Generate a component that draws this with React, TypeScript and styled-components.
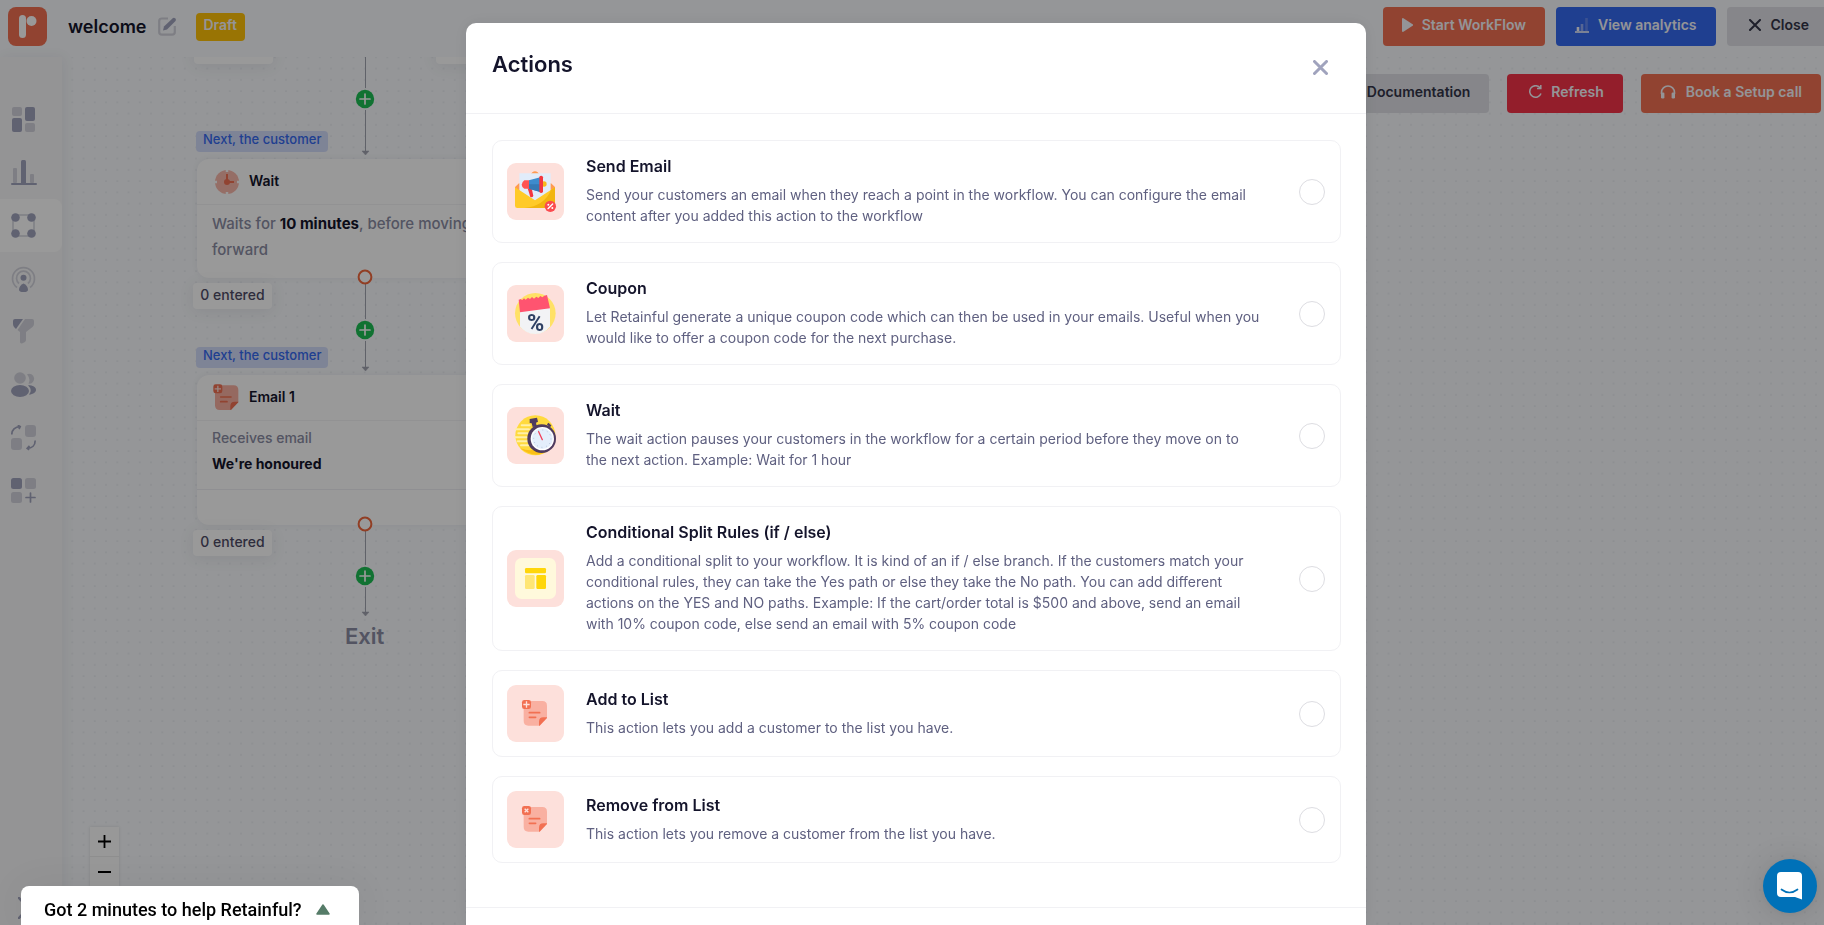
import React from 'react';
import styled, { createGlobalStyle, css } from 'styled-components';

const GlobalStyle = createGlobalStyle`
  *, *::before, *::after { box-sizing: border-box; }
  html, body, #root { height: 100%; }
  body {
    margin: 0;
    overflow: hidden;
    font-family: Inter, "Liberation Sans", sans-serif;
    color: #14142b;
    background: #f8fafd;
  }
  h1, h2, h3, p { margin: 0; }
  button { font-family: inherit; cursor: pointer; }
  a { color: inherit; text-decoration: none; }
`;

/* ---------- Page shell ---------- */

const Page = styled.div`
  height: 100vh;
  display: flex;
  flex-direction: column;
  overflow: hidden;
`;

const TopBar = styled.header`
  height: 57px;
  flex: none;
  display: flex;
  align-items: center;
  justify-content: space-between;
  padding-left: 8px;
  padding-bottom: 4px;
  overflow: hidden;
  background: #f8fafd;
  box-shadow: 0 2px 12px rgba(20, 20, 43, 0.06);
`;

const TitleGroup = styled.div`
  display: flex;
  align-items: center;
`;

const Logo = styled.a`
  display: flex;
  margin-right: 21px;
`;

const WorkflowName = styled.h1`
  font-size: 18px;
  line-height: 24px;
  font-weight: 600;
  margin-right: 11px;
`;

const IconButton = styled.button`
  display: flex;
  padding: 0;
  border: 0;
  background: none;
`;

const StatusBadge = styled.span`
  height: 28px;
  margin-left: 19px;
  padding: 0 8px;
  border-radius: 4px;
  background: #ffc107;
  color: #f7f7fc;
  font-size: 14px;
  line-height: 24px;
  font-weight: 600;
`;

const TopActions = styled.div`
  display: flex;
  gap: 11px;
  margin-right: -4px;
`;

type Tone = 'orange' | 'blue' | 'grey' | 'red';

const tones: Record<Tone, [string, string]> = {
  orange: ['#f27052', '#f7f7fc'],
  blue: ['#3569f0', '#f7f7fc'],
  grey: ['#dfe0e6', '#333448'],
  red: ['#f53349', '#f7f7fc'],
};

const Button = styled.button<{ $tone: Tone }>`
  height: 39px;
  display: flex;
  align-items: center;
  gap: 9px;
  padding: 0 19px 3px;
  border: 0;
  border-radius: 4px;
  background: ${(p) => tones[p.$tone][0]};
  color: ${(p) => tones[p.$tone][1]};
  font-size: 14px;
  line-height: 20px;
  font-weight: 600;
  white-space: nowrap;
`;

const Body = styled.div`
  flex: 1;
  min-height: 0;
  display: flex;
`;

const SideNav = styled.nav`
  width: 62px;
  flex: none;
  display: flex;
  flex-direction: column;
  padding-top: 36px;
  background: #f7f7f8;
  box-shadow: 2px 0 12px rgba(20, 20, 43, 0.06);
  z-index: 1;
`;

const NavLink = styled.a<{ $active?: boolean }>`
  height: 53px;
  flex: none;
  display: flex;
  align-items: center;
  padding-left: 11px;
  border-radius: 0 8px 8px 0;
  ${(p) => p.$active && css`background: #fff;`}
`;

const ExpandButton = styled(IconButton)`
  margin: auto 0 6px 18px;
`;

/* ---------- Workflow canvas ---------- */

const Canvas = styled.main`
  position: relative;
  flex: 1;
  min-width: 0;
  overflow: hidden;
  background: #f8fafd;
`;

const DotGrid = styled.svg`
  position: absolute;
  inset: 0;
  width: 100%;
  height: 100%;
`;

const CanvasActions = styled.div`
  position: relative;
  display: flex;
  justify-content: flex-end;
  gap: 18px;
  padding: 17px 3px 0;
`;

const Edges = styled.svg`
  position: absolute;
  left: 0;
  top: 0;
  width: 420px;
  height: 600px;
  pointer-events: none;
  z-index: 2;
`;

const Placed = styled.div<{ $x: number; $y: number }>`
  position: absolute;
  left: ${(p) => p.$x}px;
  top: ${(p) => p.$y}px;
`;

const StepTag = styled(Placed)`
  height: 21px;
  padding: 0 7px;
  border-radius: 4px;
  background: #d3dcfb;
  color: #3569f0;
  font-size: 13px;
  line-height: 17px;
  font-weight: 500;
`;

const Counter = styled(Placed)`
  width: 79px;
  height: 26px;
  border-radius: 4px;
  background: #fff;
  box-shadow: 0 2px 16px rgba(20, 20, 43, 0.08);
  color: #4e4b66;
  font-size: 14px;
  line-height: 24px;
  font-weight: 500;
  text-align: center;
`;

const Step = styled(Placed)<{ $h: number }>`
  width: 336px;
  height: ${(p) => p.$h}px;
  border-radius: 12px;
  background: #fff;
  box-shadow: 0 0 6px rgba(20, 20, 43, 0.06);
`;

const StepHead = styled.div`
  height: 46px;
  display: flex;
  align-items: center;
  gap: 10px;
  padding: 0 16px 2px;
  border-bottom: 1px solid #f3f3f6;
  font-size: 14px;
  font-weight: 600;
`;

const StepBody = styled.p<{ $divided?: boolean }>`
  padding: 6px 32px 10px 15px;
  color: #8a8ca3;
  font-size: 15px;
  line-height: 26px;
  font-weight: 500;
  strong { color: #14142b; font-weight: 700; }
  ${(p) => p.$divided && css`
    padding-top: 4px;
    padding-bottom: 12px;
    border-bottom: 1px solid #eeeef3;
    font-size: 14px;
  `}
`;

const SubjectLine = styled.span`
  display: block;
  color: #14142b;
  font-weight: 700;
`;

const ExitLabel = styled(Placed)`
  color: #8a8ca3;
  font-size: 22px;
  line-height: 28px;
  font-weight: 600;
`;

const ZoomControls = styled.div`
  position: absolute;
  left: 28px;
  bottom: 8px;
  display: flex;
  flex-direction: column;
  box-shadow: 0 0 3px rgba(0, 0, 0, 0.12);
`;

const ZoomButton = styled.button`
  width: 29px;
  height: 30px;
  display: flex;
  align-items: center;
  justify-content: center;
  padding: 0;
  border: 0;
  border-bottom: 1px solid #eee;
  background: #fefefe;
`;

/* ---------- Dialog ---------- */

const Overlay = styled.div`
  position: fixed;
  inset: 0;
  z-index: 10;
  display: flex;
  justify-content: center;
  padding: 23px 24px 0 32px;
  overflow: hidden;
  background: rgba(0, 0, 0, 0.4);
`;

const Dialog = styled.section`
  width: 100%;
  max-width: 900px;
  min-height: 100%;
  display: flex;
  flex-direction: column;
  border-radius: 10px 10px 0 0;
  background: #fff;
  box-shadow: 0 0 16px rgba(20, 20, 43, 0.08);
`;

const DialogHead = styled.header`
  height: 91px;
  flex: none;
  display: flex;
  align-items: center;
  justify-content: space-between;
  padding: 0 38px 1px 26px;
  border-bottom: 1px solid #f1f1f4;
`;

const DialogTitle = styled.h2`
  padding-bottom: 8px;
  font-size: 22px;
  line-height: 28px;
  font-weight: 600;
`;

const ActionList = styled.form`
  flex: none;
  display: flex;
  flex-direction: column;
  gap: 19px;
  padding: 26px 25px 44px 26px;
`;

const DialogFoot = styled.footer`
  flex: 1;
  border-top: 1px solid #f1f1f4;
`;

const ActionCard = styled.label`
  display: flex;
  align-items: center;
  padding: 14px 15px 14px 14px;
  border: 1px solid #f1f1f4;
  border-radius: 10px;
  cursor: pointer;
`;

const ActionIcon = styled.svg`
  width: 57px;
  height: 57px;
  flex: none;
  border-radius: 9px;
  background: #fde0db;
`;

const ActionText = styled.span`
  flex: 1;
  display: flex;
  flex-direction: column;
  gap: 8px;
  padding: 2px 36px 2px 22px;
`;

const ActionName = styled.span`
  font-size: 16px;
  line-height: 19px;
  font-weight: 600;
`;

const ActionDescription = styled.span`
  color: #5f6080;
  font-size: 14px;
  line-height: 21px;
`;

const Radio = styled.input`
  appearance: none;
  width: 26px;
  height: 26px;
  flex: none;
  margin: 0;
  border: 1px solid #dddde2;
  border-radius: 50%;
  background: #fff;
  &:checked { border: 8px solid #f27052; }
`;

/* ---------- Floating widgets ---------- */

const Survey = styled.button`
  position: fixed;
  left: 21px;
  bottom: 0;
  z-index: 20;
  height: 39px;
  display: flex;
  align-items: center;
  gap: 14px;
  padding: 8px 29px 0 23px;
  border: 0;
  border-radius: 8px 8px 0 0;
  background: #fff;
  box-shadow: 0 0 40px rgba(0, 0, 0, 0.06);
  color: #000;
  && { font-family: Roboto, sans-serif; }
  font-size: 18px;
  line-height: 24px;
  font-weight: 500;
`;

const ChatLauncher = styled.button`
  position: fixed;
  right: 7px;
  bottom: 12px;
  z-index: 20;
  width: 54px;
  height: 54px;
  display: flex;
  align-items: center;
  justify-content: center;
  padding: 0;
  border: 0;
  border-radius: 50%;
  background: #0071b8;
  box-shadow: 0 1px 6px rgba(0, 0, 0, 0.06), 0 2px 32px rgba(0, 0, 0, 0.12);
`;

/* ---------- Drawings ---------- */

const DARK = '#a0a3bd';
const LIGHT = '#d2d3dc';

const navIcons: { label: string; active?: boolean; art: React.ReactNode }[] = [
  {
    label: 'Dashboard',
    art: (
      <>
        <rect x="1" y="0" width="10" height="9" rx="2" fill={LIGHT} />
        <rect x="14" y="0" width="10" height="14" rx="2" fill={DARK} />
        <rect x="1" y="11" width="10" height="14" rx="2" fill={DARK} />
        <rect x="14" y="16" width="10" height="9" rx="2" fill={LIGHT} />
      </>
    ),
  },
  {
    label: 'Analytics',
    art: (
      <>
        <rect x="2" y="8" width="4" height="15" rx="1" fill={LIGHT} />
        <rect x="10" y="0" width="5" height="24" rx="1.500" fill={DARK} />
        <rect x="19" y="14" width="4" height="9" rx="1" fill={LIGHT} />
        <rect x="0" y="23" width="26" height="2" rx="1" fill={DARK} />
      </>
    ),
  },
  {
    label: 'Workflows',
    active: true,
    art: (
      <>
        <rect x="2" y="2" width="21" height="21" rx="6" fill="none" stroke={LIGHT} strokeWidth="1.500" />
        <circle cx="4.500" cy="4.500" r="4.300" fill={DARK} />
        <circle cx="20.500" cy="4.500" r="4.300" fill={DARK} />
        <circle cx="4.500" cy="20.500" r="4.300" fill={DARK} />
        <circle cx="20.500" cy="20.500" r="4.300" fill={DARK} />
      </>
    ),
  },
  {
    label: 'Signup forms',
    art: (
      <>
        <path d="M6 21.500A11 11 0 1 1 19 21.500" fill="none" stroke={LIGHT} strokeWidth="1.700" />
        <path d="M8 17.500A7 7 0 1 1 17 17.500" fill="none" stroke={LIGHT} strokeWidth="1.700" />
        <circle cx="12.500" cy="11.800" r="3" fill={DARK} />
        <path d="M12.500 17.500c2.500 1 4.500 3.500 4.500 6 0 2-1.500 2.500-4.500 2.500s-4.500-.5-4.500-2.500c0-2.500 2-5 4.500-6z" fill={DARK} />
      </>
    ),
  },
  {
    label: 'Segments',
    art: (
      <>
        <path d="M4 0h8L5 10 3 8Q2 6.500 2 5V2q0-2 2-2z" fill={DARK} />
        <path d="M14 0h7q2 0 2 2v3q0 1.500-1.500 3L15 13v8q0 1.500-1.500 2.300l-2 1Q9 25 9 23V13l-2.500-2z" fill={LIGHT} />
      </>
    ),
  },
  {
    label: 'Customers',
    art: (
      <>
        <path d="M16 2.200a5 5 0 1 1 1.500 9.500Q20 7 16 2.200z" fill={LIGHT} />
        <circle cx="9" cy="6" r="5.800" fill={LIGHT} />
        <path d="M17 13.300c5 0 8 2 8 4.500s-2.500 4.500-7 5q4-4.500-1-9.500z" fill={DARK} />
        <ellipse cx="9" cy="19" rx="9" ry="6" fill={DARK} />
      </>
    ),
  },
  {
    label: 'Automations',
    art: (
      <>
        <rect x="14" y="0" width="11" height="12" rx="3" fill={LIGHT} />
        <rect x="0" y="13" width="11" height="12" rx="3" fill={LIGHT} />
        <path d="M.8 9.500C.8 5 4 1.600 9 1.600M6.800.2 9.200 1.600 8 4M24.200 15.500c0 4.500-3 7.800-8 7.800M18.500 20.800l-2.300 2.500 2 1.400" fill="none" stroke={DARK} strokeWidth="1.700" />
      </>
    ),
  },
  {
    label: 'Integrations',
    art: (
      <>
        <rect x="0" y="0" width="11" height="11" rx="2.500" fill={DARK} />
        <rect x="14" y="0" width="11" height="11" rx="2.500" fill={LIGHT} />
        <rect x="0" y="14" width="11" height="11" rx="2.500" fill={LIGHT} />
        <path d="M19.500 15v9M15 19.500h9" stroke={DARK} strokeWidth="1.700" strokeLinecap="round" />
      </>
    ),
  },
];

const ListArt = ({ remove }: { remove?: boolean }) => (
  <>
    <path d="M64 48h42q14 0 14 14v36L96 122H64q-14 0-14-14V62q0-14 14-14z" fill="#f9b0a1" />
    <path d="M120 97v2L98 122h-2v-12q0-13 13-13z" fill="#f27052" />
    <path d="M67 83h31M67 97h19" stroke="#f27052" strokeWidth="5" strokeLinecap="round" />
    <rect x="45" y="45" width="27" height="27" rx="7" fill="#f27052" />
    <path d={remove ? 'M53 53l11 11M64 53L53 64' : 'M58.500 49v19M49 58.500h19'} stroke="#fde0db" strokeWidth="4" />
  </>
);

const EmailArt = () => (
  <>
    <path d="M24 72 36 61h12L76 28q8-6 16 0l28 33h12l12 11v20H24z" fill="#ff9a52" />
    <path d="M37 31h94v60l-47 28-47-28z" fill="#e1ecfa" />
    <path d="M62 76l12 0 5 22q-2 6-9 4z" fill="#f3373f" />
    <circle cx="111" cy="63" r="8" fill="#f9b81b" />
    <path d="M52 52h16v25H52q-8-5-8-12t8-13z" fill="#ff5353" />
    <path d="M66 52 100 43v44L66 77z" fill="#3d8bcd" />
    <path d="M66 64h34v23L66 77z" fill="#3579b5" />
    <rect x="97" y="38" width="11" height="52" rx="5" fill="#f3373f" />
    <path d="M24 73l60 39 60-39v55q0 7-7 7H31q-7 0-7-7z" fill="#ffca28" />
    <path d="M144 73v55q0 7-7 7H52q60-6 80-54z" fill="#f2b50f" />
    <circle cx="130" cy="130" r="17" fill="#fb4b50" />
    <path d="M123 137l14-14" stroke="#fff" strokeWidth="4" strokeLinecap="round" />
    <circle cx="124" cy="125" r="3" fill="#fff" />
    <circle cx="136" cy="135" r="3" fill="#fff" />
  </>
);

const CouponArt = () => (
  <>
    <circle cx="85" cy="85" r="61" fill="#ffe166" />
    <path d="M39 76l90-10v59q-18 22-44 22-27 0-46-22z" fill="#f2f3f5" />
    <path d="M35 44l7-2 3 4 6-6 5 4 7-6 6 4 6-6 6 5 7-6 6 4 6-6 6 4 6-5 8-2 9 40-90 12z" fill="#ff5470" />
    <text x="86" y="138" textAnchor="middle" fontSize="70" fontWeight="700" fontFamily="Roboto, sans-serif" fill="#2f4164">%</text>
  </>
);

const WaitArt = () => (
  <>
    <circle cx="85" cy="85" r="60" fill="#ffda3e" />
    <path d="M40 124q55 20 90-30v30q-40 38-90 0z" fill="#fbbf16" />
    <path d="M44 55h24M26 67h40M34 79h28M24 91h36M32 103h30M42 115h26" stroke="#fff0a8" strokeWidth="6" strokeLinecap="round" />
    <path d="M68 36l22-4 3 12-6 3 2 10-12 3-3-11-6-1z" fill="#4f3b5f" />
    <path d="M122 50l9 8" stroke="#4f3b5f" strokeWidth="7" />
    <circle cx="104" cy="95" r="43" fill="#4f3b5f" />
    <circle cx="106" cy="95" r="35" fill="#fff" />
    <circle cx="106" cy="95" r="31" fill="#e4eefb" />
    <circle cx="106" cy="95" r="26" fill="none" stroke="#9fb3cc" strokeWidth="3" strokeDasharray="2 11.600" />
    <path d="M95 74l11 24" stroke="#f0405a" strokeWidth="4" strokeLinecap="round" />
  </>
);

const SplitArt = () => (
  <>
    <rect x="24" y="24" width="123" height="123" rx="20" fill="#fff9dc" />
    <rect x="54" y="54" width="63" height="16" rx="4" fill="#ffd60a" />
    <rect x="54" y="75" width="29" height="42" rx="4" fill="#ffe675" />
    <rect x="88" y="75" width="29" height="42" rx="4" fill="#ffd60a" />
  </>
);

const actions: { id: string; name: string; text: string; art: React.ReactNode }[] = [
  {
    id: 'email',
    name: 'Send Email',
    text: 'Send your customers an email when they reach a point in the workflow. You can configure the email content after you added this action to the workflow',
    art: <EmailArt />,
  },
  {
    id: 'coupon',
    name: 'Coupon',
    text: 'Let Retainful generate a unique coupon code which can then be used in your emails. Useful when you would like to offer a coupon code for the next purchase.',
    art: <CouponArt />,
  },
  {
    id: 'wait',
    name: 'Wait',
    text: 'The wait action pauses your customers in the workflow for a certain period before they move on to the next action. Example: Wait for 1 hour',
    art: <WaitArt />,
  },
  {
    id: 'split',
    name: 'Conditional Split Rules (if / else)',
    text: 'Add a conditional split to your workflow. It is kind of an if / else branch. If the customers match your conditional rules, they can take the Yes path or else they take the No path. You can add different actions on the YES and NO paths. Example: If the cart/order total is $500 and above, send an email with 10% coupon code, else send an email with 5% coupon code',
    art: <SplitArt />,
  },
  {
    id: 'add',
    name: 'Add to List',
    text: 'This action lets you add a customer to the list you have.',
    art: <ListArt />,
  },
  {
    id: 'remove',
    name: 'Remove from List',
    text: 'This action lets you remove a customer from the list you have.',
    art: <ListArt remove />,
  },
];

/* Connector x inside the canvas, shared by every edge. */
const CX = 303;

const AddPoint = ({ y }: { y: number }) => (
  <g>
    <circle cx={CX} cy={y} r="11" fill="#f8fafd" />
    <circle cx={CX} cy={y} r="9.200" fill="#1dbf54" />
    <path d={`M${CX - 5} ${y}h10M${CX} ${y - 5}v10`} stroke="#fff" strokeWidth="1.700" strokeLinecap="round" />
  </g>
);

const Arrow = ({ from, to }: { from: number; to: number }) => (
  <g>
    <path d={`M${CX + 0.5} ${from}V${to - 3}`} stroke="#a0a3b0" strokeWidth="1" />
    <path d={`M${CX - 3} ${to - 4}h7l-3.500 4z`} fill="#a0a3b0" stroke="#a0a3b0" strokeWidth=".5" />
  </g>
);

const OutPoint = ({ y }: { y: number }) => (
  <circle cx={CX} cy={y} r="6.400" fill="#fff" stroke="#f2683c" strokeWidth="2" />
);

export default function App() {
  return (
    <>
      <GlobalStyle />
      <Page>
        <TopBar>
          <TitleGroup>
            <Logo href="#home" aria-label="Retainful">
              <svg width="39" height="39" viewBox="0 0 39 39">
                <rect width="39" height="39" rx="8" fill="#f27052" />
                <rect x="11" y="8" width="7" height="23" rx="3.500" fill="#fff" />
                <circle cx="23.500" cy="14" r="5" fill="#fff" />
              </svg>
            </Logo>
            <WorkflowName>welcome</WorkflowName>
            <IconButton aria-label="Rename workflow">
              <svg width="19" height="19" viewBox="0 0 19 19">
                <path d="M10 1.500H4Q1.200 1.500 1.200 4v11q0 2.700 2.800 2.700h10q2.800 0 2.800-2.700V9" fill="none" stroke="#d2d3dc" strokeWidth="2.200" />
                <path d="M5 13.500l1-4 8.700-8.300q1.300-1 2.600.2t.2 2.600L9 12.500z" fill="#a0a3bd" />
              </svg>
            </IconButton>
            <StatusBadge>Draft</StatusBadge>
          </TitleGroup>
          <TopActions>
            <Button $tone="orange">
              <svg width="11" height="14" viewBox="0 0 11 14"><path d="M1 0l10 6.500v1L1 14Q0 14 0 13V1Q0 0 1 0z" fill="#f7f7fc" /></svg>
              Start WorkFlow
            </Button>
            <Button $tone="blue">
              <svg width="14" height="15" viewBox="0 0 14 15">
                <path d="M0 14h14" stroke="#f7f7fc" strokeWidth="1.600" />
                <path d="M3 13V9" stroke="#f7f7fc" strokeWidth="2.600" />
                <path d="M7 13V6" stroke="#8fabf7" strokeWidth="2.600" />
                <path d="M11.500 13V0" stroke="#6288f3" strokeWidth="2.600" />
              </svg>
              View analytics
            </Button>
            <Button $tone="grey">
              <svg width="16" height="12" viewBox="-3 0 16 12"><path d="M1 1l10 10M11 1L1 11" stroke="#333448" strokeWidth="2" strokeLinecap="round" /></svg>
              Close
            </Button>
          </TopActions>
        </TopBar>

        <Body>
          <SideNav aria-label="Main">
            {navIcons.map((n) => (
              <NavLink key={n.label} href="#nav" aria-label={n.label} $active={n.active}>
                <svg width="26" height="26" viewBox="0 0 26 26">{n.art}</svg>
              </NavLink>
            ))}
            <ExpandButton aria-label="Expand menu">
              <svg width="20" height="22" viewBox="0 0 20 22">
                <path d="M1 1l9 10-9 10" fill="none" stroke={DARK} strokeWidth="2.500" strokeLinecap="round" />
              </svg>
            </ExpandButton>
          </SideNav>

          <Canvas>
            <DotGrid aria-hidden="true">
              <defs>
                <pattern id="dots" x="4.700" y="5.900" width="11.250" height="11.250" patternUnits="userSpaceOnUse">
                  <circle cx="5.600" cy="5.600" r=".55" fill="#c8ccd6" />
                </pattern>
              </defs>
              <rect width="100%" height="100%" fill="url(#dots)" />
            </DotGrid>

            <CanvasActions>
              <Button $tone="grey">Documentation</Button>
              <Button $tone="red">
                <svg width="16" height="14" viewBox="-3 0 16 14" fill="none" stroke="#f7f7fc" strokeWidth="1.500">
                  <path d="M11.200 3A5.800 5.800 0 1 0 12 8.500" />
                  <path d="M11.800 0v3.600H8" />
                </svg>
                Refresh
              </Button>
              <Button $tone="orange">
                <svg width="17" height="14" viewBox="0 0 17 14">
                  <path d="M1.500 9V7.500a6.500 6.500 0 0 1 13 0V9" fill="none" stroke="#f7f7fc" strokeWidth="1.600" />
                  <rect x="1" y="7.500" width="3.400" height="6" rx="1.200" fill="#f7f7fc" />
                  <rect x="11.600" y="7.500" width="3.400" height="6" rx="1.200" fill="#f7f7fc" />
                </svg>
                Book a Setup call
              </Button>
            </CanvasActions>

            <Counter $x={132} $y={-19} />
            <Counter $x={374} $y={-19} />

            <StepTag $x={134} $y={74}>Next, the customer</StepTag>
            <Step $x={135} $y={102} $h={119}>
              <StepHead>
                <svg width="26" height="26" viewBox="0 0 26 26">
                  <circle cx="14" cy="14" r="12" fill="#f9b8ab" />
                  <path d="M14 1v3M14 24v3M1 14h3M24 14h3" stroke="#fff" strokeWidth="2.500" />
                  <path d="M14 6v8h7" fill="none" stroke="#f27052" strokeWidth="2" />
                  <circle cx="14" cy="14" r="3" fill="#f27052" />
                </svg>
                Wait
              </StepHead>
              <StepBody>Waits for <strong>10 minutes</strong>, before moving forward</StepBody>
            </Step>
            <Counter $x={131} $y={226}>0 entered</Counter>

            <StepTag $x={134} $y={290}>Next, the customer</StepTag>
            <Step $x={135} $y={318} $h={150}>
              <StepHead>
                <svg width="26" height="26" viewBox="44 44 78 78"><ListArt /></svg>
                Email 1
              </StepHead>
              <StepBody $divided>
                Receives email
                <SubjectLine>We're honoured</SubjectLine>
              </StepBody>
            </Step>
            <Counter $x={131} $y={473}>0 entered</Counter>
            <ExitLabel $x={283} $y={565}>Exit</ExitLabel>

            <Edges viewBox="0 0 420 600">
              <Arrow from={0} to={98} />
              <AddPoint y={42} />
              <Arrow from={220} to={314} />
              <OutPoint y={220} />
              <AddPoint y={273} />
              <Arrow from={467} to={559} />
              <OutPoint y={467} />
              <AddPoint y={519} />
            </Edges>

            <ZoomControls>
              <ZoomButton aria-label="Zoom in">
                <svg width="13" height="13"><path d="M0 6.500h13M6.500 0v13" stroke="#000" strokeWidth="1.800" /></svg>
              </ZoomButton>
              <ZoomButton aria-label="Zoom out">
                <svg width="13" height="13"><path d="M0 7h13" stroke="#000" strokeWidth="2" /></svg>
              </ZoomButton>
              <ZoomButton aria-label="Fit view">
                <svg width="13" height="13"><path d="M1 4V1h3M9 1h3v3M12 9v3H9M4 12H1V9" fill="none" stroke="#000" /></svg>
              </ZoomButton>
            </ZoomControls>
          </Canvas>
        </Body>
      </Page>

      <Overlay>
        <Dialog role="dialog" aria-modal="true" aria-labelledby="dialog-title">
          <DialogHead>
            <DialogTitle id="dialog-title">Actions</DialogTitle>
            <IconButton aria-label="Close dialog">
              <svg width="15" height="15" viewBox="0 0 15 15"><path d="M1.500 1.500l12 12M13.500 1.500l-12 12" stroke="#a0a3bd" strokeWidth="3" strokeLinecap="round" /></svg>
            </IconButton>
          </DialogHead>
          <ActionList>
            {actions.map((a) => (
              <ActionCard key={a.id} htmlFor={`action-${a.id}`}>
                <ActionIcon viewBox="0 0 171 171">{a.art}</ActionIcon>
                <ActionText>
                  <ActionName>{a.name}</ActionName>
                  <ActionDescription>{a.text}</ActionDescription>
                </ActionText>
                <Radio type="radio" name="action" id={`action-${a.id}`} />
              </ActionCard>
            ))}
          </ActionList>
          <DialogFoot />
        </Dialog>
      </Overlay>

      <Survey>
        Got 2 minutes to help Retainful?
        <svg width="14" height="11" viewBox="0 0 14 11"><path d="M7 1L13 10H1z" fill="#567c68" stroke="#567c68" strokeWidth="1.500" strokeLinejoin="round" /></svg>
      </Survey>

      <ChatLauncher aria-label="Open chat">
        <svg width="26" height="28" viewBox="0 0 26 28">
          <path d="M4 0h17q4 0 4 4v23.500L18 25H4q-4 0-4-4V4q0-4 4-4z" fill="#fff" />
          <path d="M4.500 17.500q8 6 16 0" fill="none" stroke="#0071b8" strokeWidth="1.700" strokeLinecap="round" />
        </svg>
      </ChatLauncher>
    </>
  );
}
